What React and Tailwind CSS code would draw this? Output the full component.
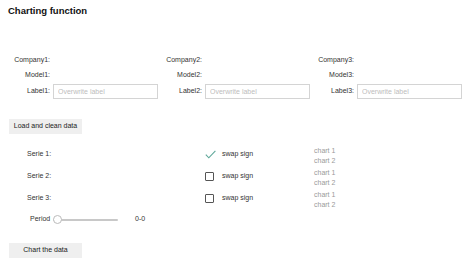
import React from "react";

const font = { fontFamily: '"Liberation Sans", Arial, sans-serif' };

function CompanyColumn({ n }) {
  return (
    <div className="w-[152px] shrink-0 flex flex-col">
      <div className="h-[15px] flex items-center">
        <span className="w-[50px] text-right">Company{n}:</span>
      </div>
      <div className="h-[15px] flex items-center">
        <span className="w-[50px] text-right">Model{n}:</span>
      </div>
      <div className="h-[16px] flex items-center">
        <span className="w-[50px] shrink-0 text-right">Label{n}:</span>
        <input
          placeholder="Overwrite label"
          className="ml-[3px] w-[105px] shrink-0 h-[15px] border border-[#d4d4d4] px-[4px] text-[7px] text-[#333] placeholder:text-[#bdbdbd] outline-none"
        />
      </div>
    </div>
  );
}

function SerieRow({ n, checked }) {
  return (
    <div className="h-[22px] flex items-start">
      <div className="w-[205px] h-[22px] flex items-center pl-[27px]">Serie {n}:</div>
      <div className="w-[17px] h-[22px] flex items-center">
        {checked ? (
          <svg width="11" height="9" viewBox="0 0 11 9">
            <polyline points="0.8,4.6 3.8,7.8 10.4,0.8" fill="none" stroke="#5fa89a" strokeWidth="1.1" />
          </svg>
        ) : (
          <div className="w-[9px] h-[9px] border-[1.3px] border-[#555] rounded-[1px]" />
        )}
      </div>
      <div className="w-[92px] h-[22px] flex items-center">swap sign</div>
      <div className="pt-[3px] leading-[10px] text-[#9a9a9a]">
        <div>chart 1</div>
        <div>chart 2</div>
      </div>
    </div>
  );
}

export default function App() {
  return (
    <div className="w-[474px] h-[271px] bg-white text-[7px] text-[#333] overflow-hidden" style={font}>
      <div className="h-[22px] flex items-center pl-[8px] text-[9.5px] font-bold text-[#111]">
        Charting function
      </div>

      <div className="mt-[31px] flex">
        <CompanyColumn n={1} />
        <CompanyColumn n={2} />
        <CompanyColumn n={3} />
      </div>

      <div className="mt-[20px] pl-[9px]">
        <button className="w-[73px] h-[15px] bg-[#efefef] text-[#222] text-[7px]">
          Load and clean data
        </button>
      </div>

      <div className="mt-[9px]">
        <SerieRow n={1} checked />
        <SerieRow n={2} />
        <SerieRow n={3} />
      </div>

      <div className="h-[21px] flex items-center">
        <span className="pl-[30px] w-[53px]">Period</span>
        <div className="relative w-[65px] h-[9px] flex items-center">
          <div className="w-full h-[2px] bg-[#c8c8c8] rounded-full" />
          <div className="absolute left-0 top-0 w-[9px] h-[9px] rounded-full bg-white border border-[#bbb]" />
        </div>
        <span className="ml-[17px]">0-0</span>
      </div>

      <div className="mt-[13px] pl-[9px]">
        <button className="w-[73px] h-[15px] bg-[#efefef] text-[#222] text-[7px]">
          Chart the data
        </button>
      </div>
    </div>
  );
}
